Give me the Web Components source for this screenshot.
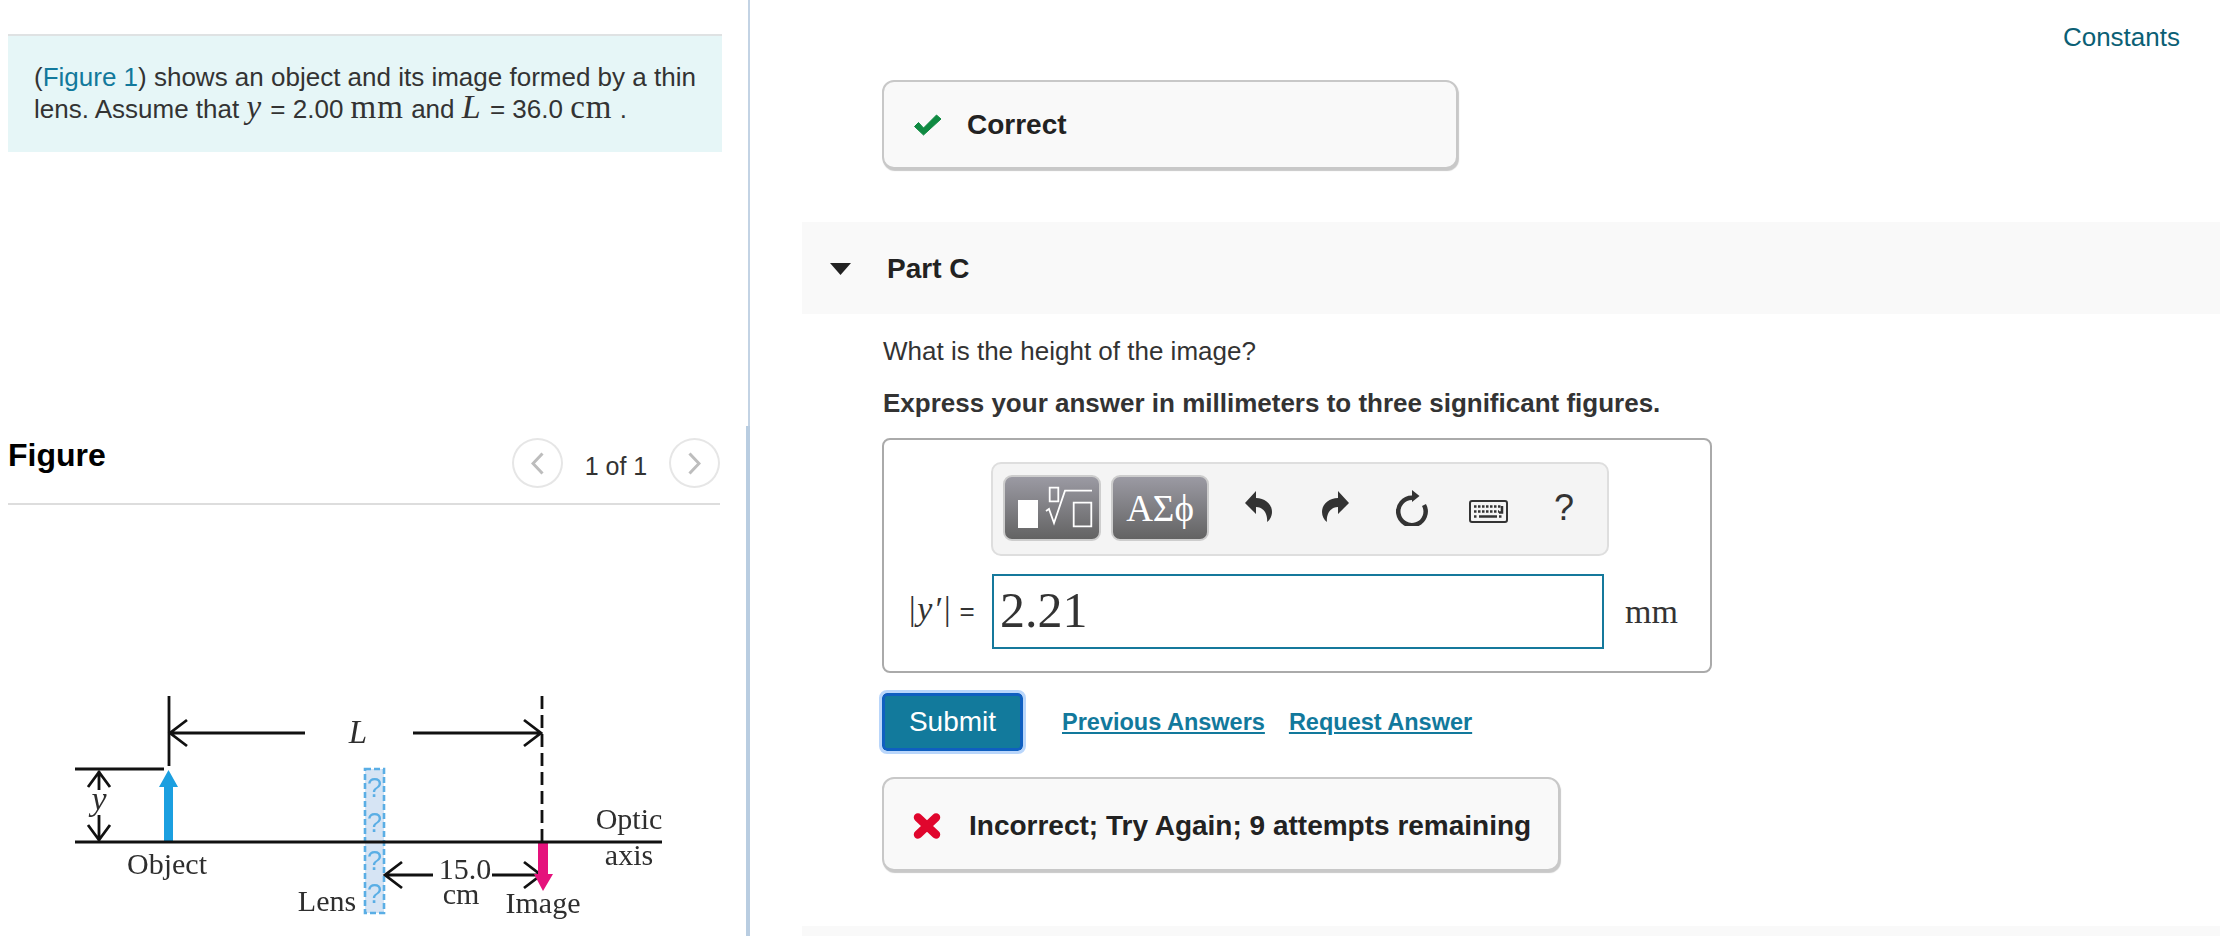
<!DOCTYPE html>
<html>
<head>
<meta charset="utf-8">
<title>Part C</title>
<style>
    html, body{ margin: 0; height: 936px; overflow: hidden; background: #fff; }
    body{ font-family: "Liberation Sans", Arial, sans-serif; color: #333; font-size: 26px; }
</style>
</head>
<body>
<mp-app>
    <mp-left slot="left">
        <mp-intro>
            (<a>Figure 1</a>) shows an object and its image formed by a thin lens. Assume that
            <mp-var>y</mp-var> = 2.00 <mp-unit>mm</mp-unit> and <mp-var big>L</mp-var> = 36.0 <mp-unit>cm</mp-unit> .
        </mp-intro>
        <mp-pager></mp-pager>
        <mp-diagram></mp-diagram>
    </mp-left>
    <mp-right slot="right">
        <mp-constants>Constants</mp-constants>
        <mp-feedback kind="ok" style="width:576px;height:89px">Correct</mp-feedback>
        <mp-part>Part C</mp-part>
        <mp-prompt>
            <span slot="q">What is the height of the image?</span>
            <span slot="how">Express your answer in millimeters to three significant figures.</span>
        </mp-prompt>
        <mp-answer value="2.21"></mp-answer>
        <mp-actions></mp-actions>
        <mp-feedback kind="bad" style="width:678px;height:94px;margin-top:26px;padding-top:3px">Incorrect; Try Again; 9 attempts remaining</mp-feedback>
        <mp-nextbar></mp-nextbar>
    </mp-right>
</mp-app>

<script>
    // small helper, every element is the same: a style plus some markup in an open shadow root
    function define(name, html){
        customElements.define(name, class extends HTMLElement{
            constructor(){
                super();
                this.attachShadow({mode: 'open'});
                this.shadowRoot.innerHTML = typeof html == 'function' ? html(this) : html;
            }
        });
    }

    define('mp-app', `
        <style>
            :host{ display: flex; width: 2234px; height: 936px; overflow: hidden; }
            ::slotted([slot=left]){ flex: 0 0 750px; }
            ::slotted([slot=right]){ flex: 1; }
        </style>
        <slot name="left"></slot><slot name="right"></slot>`);

    define('mp-left', `
        <style>
            :host{ display: block; box-sizing: border-box; position: relative; height: 936px;
                   padding: 34px 0 0 8px; border-right: 2px solid #c3d3e4; }
            #handle{ position: absolute; right: -2px; top: 426px; bottom: 0; width: 4px; background: #b9cde1; }
        </style>
        <slot></slot><div id="handle"></div>`);

    define('mp-intro', `
        <style>
            :host{ display: block; box-sizing: border-box; width: 714px; height: 118px;
                   border-top: 2px solid #dfe2e3; background: #e6f6f7; padding: 25px 8px 0 26px;
                   font-size: 26px; line-height: 32px; color: #333; }
            ::slotted(a){ color: #12799c; }
        </style>
        <slot></slot>`);

    define('mp-var', el => `
        <style>
            :host{ font-family: "Liberation Serif", serif; font-style: italic; line-height: 0;
                   font-size: ${el.hasAttribute('big') ? 34 : 33}px; margin-right: 2px; }
        </style>
        <slot></slot>`);

    define('mp-unit', `
        <style>:host{ font-family: "Liberation Serif", serif; font-size: 33px; line-height: 0; letter-spacing: 1px; }</style>
        <slot></slot>`);

    define('mp-pager', `
        <style>
            :host{ display: flex; align-items: center; box-sizing: border-box; width: 712px; height: 67px;
                   margin-top: 286px; border-bottom: 2px solid #dddddd; padding-bottom: 15px; }
            h2{ margin: 0 auto 16px 0; font-size: 32px; line-height: 36px; color: #000; }
            .c{ box-sizing: border-box; width: 51px; height: 50px; border: 2px solid #e6e6e6; border-radius: 50%;
                display: flex; align-items: center; justify-content: center; }
            span{ width: 106px; text-align: center; font-size: 25px; line-height: 30px; margin-top: 6px; }
            svg{ display: block; }
        </style>
        <h2>Figure</h2>
        <div class="c"><svg width="13" height="23"><path d="M11.5 1.5 2 11.5l9.5 10" fill="none" stroke="#bdbdbd" stroke-width="3"/></svg></div>
        <span>1 of 1</span>
        <div class="c"><svg width="13" height="23"><path d="M1.5 1.5 11 11.5l-9.5 10" fill="none" stroke="#bdbdbd" stroke-width="3"/></svg></div>`);

    define('mp-diagram', `
        <style>
            :host{ display: block; margin-top: 165px; }
            svg{ display: block; filter: blur(.7px); }
            text{ font-family: "Liberation Serif", serif; font-size: 30px; fill: #2e2e2e; text-anchor: middle; }
            .q{ font-family: "Liberation Sans", sans-serif; font-size: 27px; fill: #5aaee5; }
            .l{ fill: none; stroke: #111; stroke-width: 2.8; }
        </style>
        <svg width="712" height="266" viewBox="8 670 712 266">
            <rect x="365" y="769" width="19" height="144" fill="#d6e4f4" stroke="#5aaee5" stroke-width="2.6" stroke-dasharray="6 3"/>
            <text class="q" x="374.500" y="797">?</text>
            <text class="q" x="374.500" y="832">?</text>
            <text class="q" x="374.500" y="870">?</text>
            <text class="q" x="374.500" y="903">?</text>
            <path class="l" d="M169 696V766M75 769H164"/>
            <path class="l" stroke-dasharray="13 6" d="M542 696V842"/>
            <path class="l" d="M305 733H171M187 720l-17 13 17 13M413 733H540M524 720l17 13-17 13"/>
            <path class="l" d="M99 771V790M88 787l11-15 11 15M99 815V841M88 825l11 15 11-15"/>
            <path class="l" d="M433 875H386M402 862l-17 13 17 13M492 875H540M524 862l17 13-17 13"/>
            <path d="M164 842V787H159L168.500 770 178 787H173V842Z" fill="#1b9fe0"/>
            <path d="M538 842H548V874H553L543 891 534 874H538Z" fill="#e5127c"/>
            <path d="M75 842H662" fill="none" stroke="#111" stroke-width="3"/>
            <text x="358" y="743" style="font-style:italic;font-size:33px">L</text>
            <text x="99" y="810" style="font-style:italic;font-size:34px">y</text>
            <text x="167" y="874">Object</text>
            <text x="327" y="911">Lens</text>
            <text x="465" y="879">15.0</text>
            <text x="461" y="904">cm</text>
            <text x="543" y="913">Image</text>
            <text x="629" y="829">Optic</text>
            <text x="629" y="865">axis</text>
        </svg>`);

    define('mp-constants', `
        <style>
            :host{ display: block; box-sizing: border-box; height: 80px; padding: 19px 40px 0 0;
                   text-align: right; font-size: 26px; line-height: 36px; color: #0b5f75; }
        </style>
        <slot></slot>`);

    const fbIcons = {
        ok: `<svg width="29" height="22" style="margin-right:25px"><path d="M1.500 12.500 5.500 8.500 10.500 14 23.500 1 28 5 10.500 21Z" fill="#0f8a42" stroke="#0f8a42" stroke-linejoin="round"/></svg>`,
        bad: `<svg width="28" height="26" style="margin-right:28px"><path d="M5 4.500 23 21.500M23 4.500 5 21.500" stroke="#e0062d" stroke-width="8.500" stroke-linecap="round"/></svg>`
    };
    define('mp-feedback', el => `
        <style>
            :host{ display: flex; align-items: center; box-sizing: border-box; margin-left: 80px; padding-left: 29px;
                   background: #f9f9f9; border: 2px solid #c8c8c8; border-radius: 12px; box-shadow: 1px 2px 1px #c8c8c8;
                   font-weight: 700; font-size: 28px; color: #222; }
            svg{ flex: none; }
        </style>
        ${fbIcons[el.getAttribute('kind')]}<slot></slot>`);

    define('mp-part', `
        <style>
            :host{ display: flex; align-items: center; box-sizing: border-box; height: 92px; margin-top: 53px;
                   padding: 1px 0 0 28px; background: #f9f9f9; font-weight: 700; font-size: 28px; color: #222; }
            svg{ margin-right: 36px; }
        </style>
        <svg width="21" height="12"><path d="M0 0H21L10.500 12Z" fill="#222"/></svg><slot></slot>`);

    define('mp-prompt', `
        <style>
            :host{ display: block; margin: 19px 0 0 81px; font-size: 26px; line-height: 36px; color: #333; }
            div{ margin-bottom: 16px; }
            b{ display: block; }
        </style>
        <div><slot name="q"></slot></div>
        <b><slot name="how"></slot></b>`);

    define('mp-toolbar', `
        <style>
            :host{ display: flex; align-items: center; box-sizing: border-box; width: 618px; height: 94px;
                   padding: 0 0 2px 10px; background: #f4f4f4; border: 2px solid #dedede; border-radius: 10px; color: #333; }
            .b{ box-sizing: border-box; width: 98px; height: 66px; border: 2px solid #cdcdcd; border-radius: 9px;
                background: linear-gradient(#9b9aa3, #636363); display: flex; align-items: center; justify-content: center; }
            .g{ margin-left: 10px; color: #fff; font-family: "Liberation Serif", serif; font-size: 37px; }
            svg{ display: block; flex: none; }
            .q{ margin-left: 46px; font-size: 36px; line-height: 40px; }
        </style>
        <div class="b">
            <svg width="94" height="62" viewBox="1005 477 94 62">
                <rect x="1018" y="500" width="20" height="28" fill="#fff"/>
                <path d="M1049.700 487.700H1058.300V501.300H1049.700ZM1073.700 502.700H1091.300V526.300H1073.700ZM1046 511 1049 509 1054 523 1065 490.700H1092" fill="none" stroke="#fff" stroke-width="1.800"/>
            </svg>
        </div>
        <div class="b g">ΑΣϕ</div>
        <svg style="margin-left:36px;margin-top:-3px" width="27" height="31"><path d="M0 12 11 0V7C20 7 27 13 27 21 27 25 25 29 22 31 23 24 19 16 11 16V23Z" fill="#333"/></svg>
        <svg style="margin-left:50px;margin-top:-3px;transform:scaleX(-1)" width="27" height="31"><path d="M0 12 11 0V7C20 7 27 13 27 21 27 25 25 29 22 31 23 24 19 16 11 16V23Z" fill="#333"/></svg>
        <svg style="margin-left:47px" width="32" height="36"><path d="M16 7.800A13.700 13.700 0 1 0 28 15" fill="none" stroke="#333" stroke-width="4.500"/><path d="M16 0 23.500 6 16 12Z" fill="#333"/></svg>
        <svg style="margin-left:41px;margin-top:7px" width="39" height="23">
            <rect x="1" y="1" width="37" height="21" rx="2" fill="#f4f4f4" stroke="#333" stroke-width="2"/>
            <path d="M5 6.500H33M5 11.500H30M5 16.500H8M30 16.500H34" fill="none" stroke="#333" stroke-width="2.500" stroke-dasharray="2.500 1.500"/>
            <path d="M10 16.500H28M33 6V12.500H30" fill="none" stroke="#333" stroke-width="2.500"/>
        </svg>
        <span class="q">?</span>`);

    define('mp-answer', el => `
        <style>
            :host{ display: block; box-sizing: border-box; width: 830px; height: 235px; margin: 17px 0 0 80px;
                   padding-top: 22px; border: 2px solid #aaaaaa; border-radius: 8px; }
            mp-toolbar{ margin-left: 107px; }
            #row{ display: flex; align-items: center; margin-top: 18px; }
            label{ flex: 0 0 108px; box-sizing: border-box; padding-left: 23px; font-size: 26px; white-space: nowrap; }
            i{ font-family: "Liberation Serif", serif; font-size: 34px; letter-spacing: 1px; line-height: 0; }
            #in{ box-sizing: border-box; width: 612px; height: 75px; border: 2px solid #15799c;
                 padding-left: 6px; font-family: "Liberation Serif", serif; font-size: 50px; line-height: 69px; }
            #u{ margin-left: 21px; font-family: "Liberation Serif", serif; font-size: 34px; }
        </style>
        <mp-toolbar></mp-toolbar>
        <div id="row">
            <label><i>|y′|</i> =</label>
            <div id="in">${el.getAttribute('value')}</div>
            <span id="u">mm</span>
        </div>`);

    define('mp-actions', `
        <style>
            :host{ display: flex; align-items: center; margin: 20px 0 0 80px; font-size: 23.500px; }
            button{ box-sizing: border-box; width: 141px; height: 58px; padding: 0; margin-right: 39px;
                    font: 28px "Liberation Sans", sans-serif; color: #fff; background: #127a9c;
                    border: 3px solid #0f5fc0; border-radius: 5px; outline: 3px solid #b9d6fb; }
            a{ color: #12799c; font-weight: 700; text-decoration: underline; margin-right: 24px; }
        </style>
        <button>Submit</button>
        <a>Previous Answers</a>
        <a>Request Answer</a>`);

    define('mp-nextbar', `
        <style>:host{ display: block; height: 10px; margin-top: 55px; background: #f9f9f9; }</style>`);

    define('mp-right', `
        <style>
            :host{ display: block; box-sizing: border-box; height: 936px; padding: 0 14px 0 52px; overflow: hidden; }
        </style>
        <slot></slot>`);
</script>
</body>
</html>
